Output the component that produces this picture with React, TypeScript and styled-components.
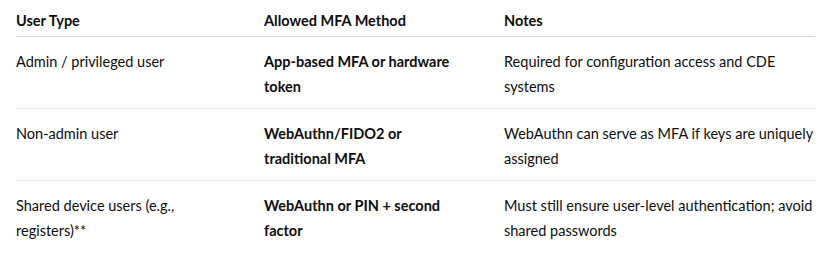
import React from "react";
import styled, { createGlobalStyle } from "styled-components";

const Global = createGlobalStyle`
  body {
    margin: 0;
    background: #ffffff;
    font-family: Lato, "Noto Sans", sans-serif;
    color: #0d0d0d;
  }
`;

type Row = { user: string; method: string; notes: string };

const rows: Row[] = [
  {
    user: "Admin / privileged user",
    method: "App-based MFA or hardware token",
    notes: "Required for configuration access and CDE systems",
  },
  {
    user: "Non-admin user",
    method: "WebAuthn/FIDO2 or traditional MFA",
    notes: "WebAuthn can serve as MFA if keys are uniquely assigned",
  },
  {
    user: "Shared device users (e.g., registers)**",
    method: "WebAuthn or PIN + second factor",
    notes: "Must still ensure user-level authentication; avoid shared passwords",
  },
];

export default function App() {
  return (
    <>
      <Global />
      <Table>
        <HeadRow>
          <HeadCell>User Type</HeadCell>
          <HeadCell>Allowed MFA Method</HeadCell>
          <HeadCell>Notes</HeadCell>
        </HeadRow>
        {rows.map((r, i) => (
          <BodyRow key={r.user} $last={i === rows.length - 1}>
            <Cell>{r.user}</Cell>
            <Cell $bold>{r.method}</Cell>
            <Cell>{r.notes}</Cell>
          </BodyRow>
        ))}
      </Table>
    </>
  );
}

const Table = styled.div`
  margin: 0 15px 0 16px;
  font-size: 14.5px;
  line-height: 25px;
`;

const RowBase = styled.div`
  display: grid;
  grid-template-columns: 248px 240px 1fr;
`;

const HeadRow = styled(RowBase)`
  padding: 8px 0 3px;
  border-bottom: 1px solid #dadada;
`;

const BodyRow = styled(RowBase)<{ $last?: boolean }>`
  padding: 12px 0 9px;
  border-bottom: 1px solid ${(p) => (p.$last ? "transparent" : "#ececec")};
`;

const HeadCell = styled.div`
  font-weight: 700;
  padding-right: 16px;
`;

const Cell = styled.div<{ $bold?: boolean }>`
  font-weight: ${(p) => (p.$bold ? 700 : 400)};
  padding-right: ${(p) => (p.$bold ? "40px" : "16px")};
  &:last-child {
    padding-right: 0;
  }
`;
